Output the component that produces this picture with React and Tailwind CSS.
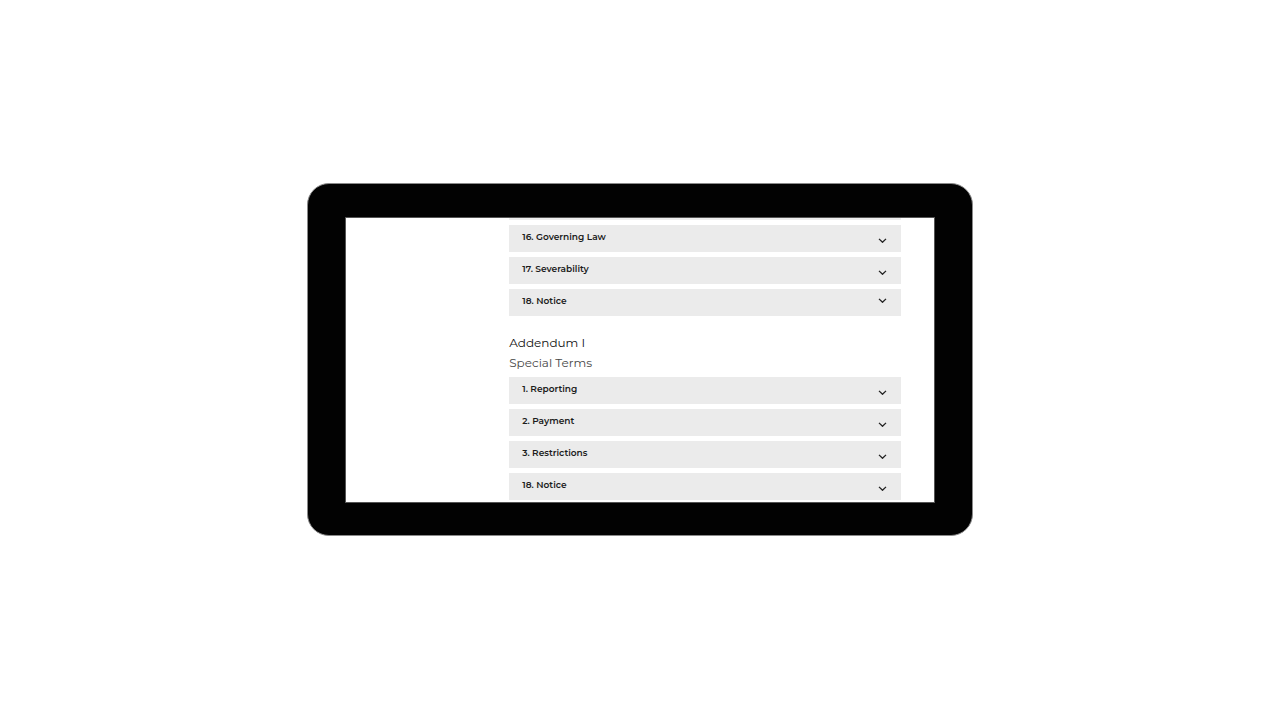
import { clsx } from 'clsx';

const agreement = [
  { title: '16. Governing Law' },
  { title: '17. Severability' },
  { title: '18. Notice', centered: true },
];

const specialTerms = [
  { title: '1. Reporting' },
  { title: '2. Payment' },
  { title: '3. Restrictions' },
  { title: '18. Notice' },
];

function Chevron({ className }) {
  return (
    <svg viewBox="0 0 8 8" fill="none" className={clsx('size-2 shrink-0', className)} aria-hidden="true">
      <path
        d="M1 1.9 4.5 5.3 8 1.9"
        stroke="#222222"
        strokeWidth="1.3"
        strokeLinejoin="round"
      />
    </svg>
  );
}

function Section({ title, centered }) {
  return (
    <button
      type="button"
      aria-expanded="false"
      className="flex w-full justify-between bg-[#ebebeb] pt-1 pb-[7px] pl-[13px] pr-[15px] text-left"
    >
      <span className="text-[9px] leading-4 font-semibold text-[#1c1c1c]">{title}</span>
      <Chevron className={clsx('overflow-visible', centered ? 'self-center' : 'self-end')} />
    </button>
  );
}

function Accordion({ items }) {
  return (
    <div className="flex flex-col gap-[5px]">
      {items.map((item) => (
        <Section key={item.title} {...item} />
      ))}
    </div>
  );
}

export default function App() {
  return (
    <div className="flex min-h-screen items-center justify-center bg-white pb-px font-[Montserrat,Inter,sans-serif]">
      {/* Tablet bezel */}
      <div className="w-[52%] rounded-[22px] border border-[#8a8a8a] bg-[#020202] px-[37px] pt-[33px] pb-8">
        <main className="overflow-hidden border border-[#555555] bg-white pr-[33px] pb-0.5 pl-[163px]">
          {/* Bottom edge of the section scrolled out of view */}
          <div className="mb-[5px] h-0.5 bg-[#eeeeee]" />
          <Accordion items={agreement} />

          <div className="mt-[17px] mb-1">
            <h2 className="text-xs leading-5 text-[#111111]">Addendum I</h2>
            <h3 className="text-xs leading-5 text-[#484848]">Special Terms</h3>
          </div>
          <Accordion items={specialTerms} />
        </main>
      </div>
    </div>
  );
}
